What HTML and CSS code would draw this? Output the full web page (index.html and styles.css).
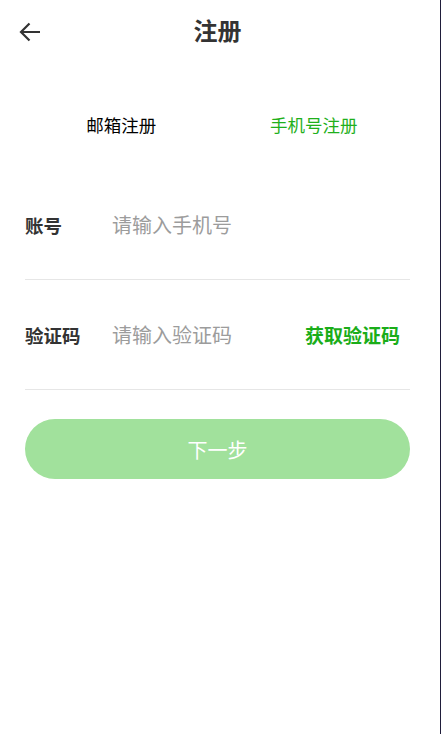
FILE: index.html
```html
<!DOCTYPE html>
<html lang="zh-CN">
<head>
<meta charset="utf-8">
<title>注册</title>
<link rel="stylesheet" href="styles.css">
</head>
<body>
<div class="page">
  <header class="header">
    <button class="back" aria-label="返回">
      <svg width="22" height="22" viewBox="0 0 22 22"><path d="M21 11H2.5M10.5 2.5L2 11l8.5 8.5" fill="none" stroke="#333" stroke-width="2.2"/></svg>
    </button>
    <h1 class="title">注册</h1>
    <span></span>
  </header>
  <nav class="tabs">
    <div class="tab">邮箱注册</div>
    <div class="tab active">手机号注册</div>
  </nav>
  <form class="form">
    <div class="row">
      <label class="label">账号</label>
      <input class="field" type="text" placeholder="请输入手机号">
    </div>
    <div class="row">
      <label class="label">验证码</label>
      <input class="field" type="text" placeholder="请输入验证码">
      <span class="code">获取验证码</span>
    </div>
    <button class="next" type="button">下一步</button>
  </form>
</div>
</body>
</html>
```
FILE: styles.css
```css
html, body {
  margin: 0;
  padding: 0;
  background: #fff;
}
body {
  font-family: "Noto Sans CJK SC", "Noto Sans", sans-serif;
  color: #333;
}
.page {
  box-sizing: border-box;
  width: 441px;
  min-height: 734px;
  border-right: 1px solid #1f1d3a;
  padding: 0 30px 0 25px;
}
.header {
  height: 64px;
  display: grid;
  grid-template-columns: 1fr auto 1fr;
  align-items: center;
}
.back {
  justify-self: start;
  margin-left: -6px;
  padding: 0;
  border: 0;
  background: none;
  width: 22px;
  height: 22px;
  display: flex;
}
.title {
  margin: 0 0 6px;
  font-size: 24px;
  font-weight: 700;
  color: #333;
}
.tabs {
  box-sizing: border-box;
  height: 106px;
  padding-top: 14px;
  display: flex;
  align-items: center;
}
.tab {
  flex: 1;
  text-align: center;
  font-size: 17.5px;
  color: #000;
}
.tab.active {
  color: #1fb01c;
}
.form {
  display: flex;
  flex-direction: column;
}
.row {
  box-sizing: border-box;
  height: 110px;
  border-bottom: 1px solid #e6e6e6;
  display: flex;
  align-items: center;
}
.label {
  width: 87px;
  flex: none;
  font-size: 18.5px;
  font-weight: 700;
  color: #333;
}
.field {
  flex: 1;
  min-width: 0;
  border: 0;
  outline: none;
  padding: 0;
  font-family: inherit;
  font-size: 20px;
  color: #333;
  background: transparent;
}
.field::placeholder {
  color: #9c9c9c;
}
.code {
  flex: none;
  padding-right: 10px;
  font-size: 19px;
  font-weight: 700;
  color: #1aad19;
}
.next {
  margin-top: 29px;
  height: 60px;
  border: 0;
  border-radius: 30px;
  background: #a1e19c;
  color: #fff;
  font-family: inherit;
  font-size: 20px;
}
```
